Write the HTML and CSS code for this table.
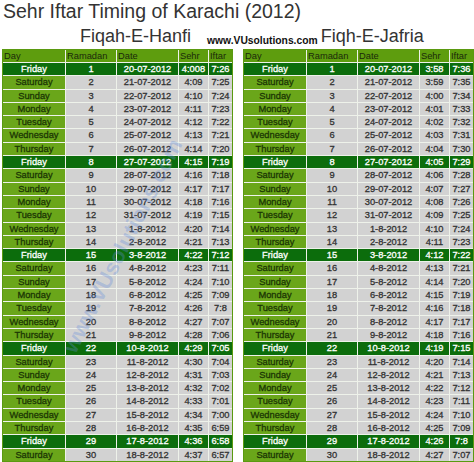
FILE: index.html
```html
<!DOCTYPE html>
<html>
<head>
<meta charset="utf-8">
<title>Sehr Iftar Timing of Karachi (2012)</title>
<link rel="stylesheet" href="styles.css">
</head>
<body>
<div class="page">
  <h1 class="title">Sehr Iftar Timing of Karachi (2012)</h1>
  <div class="subtitles">
    <span class="fiqh">Fiqah-E-Hanfi</span>
    <span class="site">www.VUsolutions.com</span>
    <span class="fiqh">Fiqh-E-Jafria</span>
  </div>
  <div class="tables">
    <div class="table">
      <div class="row head"><span>Day</span><span>Ramadan</span><span>Date</span><span>Sehr</span><span>Iftar</span></div>
      <div class="row fri"><span>Friday</span><span>1</span><span>20-07-2012</span><span>4:008</span><span>7:26</span></div>
      <div class="row"><span>Saturday</span><span>2</span><span>21-07-2012</span><span>4:09</span><span>7:25</span></div>
      <div class="row"><span>Sunday</span><span>3</span><span>22-07-2012</span><span>4:10</span><span>7:24</span></div>
      <div class="row"><span>Monday</span><span>4</span><span>23-07-2012</span><span>4:11</span><span>7:23</span></div>
      <div class="row"><span>Tuesday</span><span>5</span><span>24-07-2012</span><span>4:12</span><span>7:22</span></div>
      <div class="row"><span>Wednesday</span><span>6</span><span>25-07-2012</span><span>4:13</span><span>7:21</span></div>
      <div class="row"><span>Thursday</span><span>7</span><span>26-07-2012</span><span>4:14</span><span>7:20</span></div>
      <div class="row fri"><span>Friday</span><span>8</span><span>27-07-2012</span><span>4:15</span><span>7:19</span></div>
      <div class="row"><span>Saturday</span><span>9</span><span>28-07-2012</span><span>4:16</span><span>7:18</span></div>
      <div class="row"><span>Sunday</span><span>10</span><span>29-07-2012</span><span>4:17</span><span>7:17</span></div>
      <div class="row"><span>Monday</span><span>11</span><span>30-07-2012</span><span>4:18</span><span>7:16</span></div>
      <div class="row"><span>Tuesday</span><span>12</span><span>31-07-2012</span><span>4:19</span><span>7:15</span></div>
      <div class="row"><span>Wednesday</span><span>13</span><span>1-8-2012</span><span>4:20</span><span>7:14</span></div>
      <div class="row"><span>Thursday</span><span>14</span><span>2-8-2012</span><span>4:21</span><span>7:13</span></div>
      <div class="row fri"><span>Friday</span><span>15</span><span>3-8-2012</span><span>4:22</span><span>7:12</span></div>
      <div class="row"><span>Saturday</span><span>16</span><span>4-8-2012</span><span>4:23</span><span>7:11</span></div>
      <div class="row"><span>Sunday</span><span>17</span><span>5-8-2012</span><span>4:24</span><span>7:10</span></div>
      <div class="row"><span>Monday</span><span>18</span><span>6-8-2012</span><span>4:25</span><span>7:09</span></div>
      <div class="row"><span>Tuesday</span><span>19</span><span>7-8-2012</span><span>4:26</span><span>7:8</span></div>
      <div class="row"><span>Wednesday</span><span>20</span><span>8-8-2012</span><span>4:27</span><span>7:07</span></div>
      <div class="row"><span>Thursday</span><span>21</span><span>9-8-2012</span><span>4:28</span><span>7:06</span></div>
      <div class="row fri"><span>Friday</span><span>22</span><span>10-8-2012</span><span>4:29</span><span>7:05</span></div>
      <div class="row"><span>Saturday</span><span>23</span><span>11-8-2012</span><span>4:30</span><span>7:04</span></div>
      <div class="row"><span>Sunday</span><span>24</span><span>12-8-2012</span><span>4:31</span><span>7:03</span></div>
      <div class="row"><span>Monday</span><span>25</span><span>13-8-2012</span><span>4:32</span><span>7:02</span></div>
      <div class="row"><span>Tuesday</span><span>26</span><span>14-8-2012</span><span>4:33</span><span>7:01</span></div>
      <div class="row"><span>Wednesday</span><span>27</span><span>15-8-2012</span><span>4:34</span><span>7:00</span></div>
      <div class="row"><span>Thursday</span><span>28</span><span>16-8-2012</span><span>4:35</span><span>6:59</span></div>
      <div class="row fri"><span>Friday</span><span>29</span><span>17-8-2012</span><span>4:36</span><span>6:58</span></div>
      <div class="row"><span>Saturday</span><span>30</span><span>18-8-2012</span><span>4:37</span><span>6:57</span></div>
      <span class="watermark">www.VUsolutions.com</span>
    </div>
    <div class="table">
      <div class="row head"><span>Day</span><span>Ramadan</span><span>Date</span><span>Sehr</span><span>Iftar</span></div>
      <div class="row fri"><span>Friday</span><span>1</span><span>20-07-2012</span><span>3:58</span><span>7:36</span></div>
      <div class="row"><span>Saturday</span><span>2</span><span>21-07-2012</span><span>3:59</span><span>7:35</span></div>
      <div class="row"><span>Sunday</span><span>3</span><span>22-07-2012</span><span>4:00</span><span>7:34</span></div>
      <div class="row"><span>Monday</span><span>4</span><span>23-07-2012</span><span>4:01</span><span>7:33</span></div>
      <div class="row"><span>Tuesday</span><span>5</span><span>24-07-2012</span><span>4:02</span><span>7:32</span></div>
      <div class="row"><span>Wednesday</span><span>6</span><span>25-07-2012</span><span>4:03</span><span>7:31</span></div>
      <div class="row"><span>Thursday</span><span>7</span><span>26-07-2012</span><span>4:04</span><span>7:30</span></div>
      <div class="row fri"><span>Friday</span><span>8</span><span>27-07-2012</span><span>4:05</span><span>7:29</span></div>
      <div class="row"><span>Saturday</span><span>9</span><span>28-07-2012</span><span>4:06</span><span>7:28</span></div>
      <div class="row"><span>Sunday</span><span>10</span><span>29-07-2012</span><span>4:07</span><span>7:27</span></div>
      <div class="row"><span>Monday</span><span>11</span><span>30-07-2012</span><span>4:08</span><span>7:26</span></div>
      <div class="row"><span>Tuesday</span><span>12</span><span>31-07-2012</span><span>4:09</span><span>7:25</span></div>
      <div class="row"><span>Wednesday</span><span>13</span><span>1-8-2012</span><span>4:10</span><span>7:24</span></div>
      <div class="row"><span>Thursday</span><span>14</span><span>2-8-2012</span><span>4:11</span><span>7:23</span></div>
      <div class="row fri"><span>Friday</span><span>15</span><span>3-8-2012</span><span>4:12</span><span>7:22</span></div>
      <div class="row"><span>Saturday</span><span>16</span><span>4-8-2012</span><span>4:13</span><span>7:21</span></div>
      <div class="row"><span>Sunday</span><span>17</span><span>5-8-2012</span><span>4:14</span><span>7:20</span></div>
      <div class="row"><span>Monday</span><span>18</span><span>6-8-2012</span><span>4:15</span><span>7:19</span></div>
      <div class="row"><span>Tuesday</span><span>19</span><span>7-8-2012</span><span>4:16</span><span>7:18</span></div>
      <div class="row"><span>Wednesday</span><span>20</span><span>8-8-2012</span><span>4:17</span><span>7:17</span></div>
      <div class="row"><span>Thursday</span><span>21</span><span>9-8-2012</span><span>4:18</span><span>7:16</span></div>
      <div class="row fri"><span>Friday</span><span>22</span><span>10-8-2012</span><span>4:19</span><span>7:15</span></div>
      <div class="row"><span>Saturday</span><span>23</span><span>11-8-2012</span><span>4:20</span><span>7:14</span></div>
      <div class="row"><span>Sunday</span><span>24</span><span>12-8-2012</span><span>4:21</span><span>7:13</span></div>
      <div class="row"><span>Monday</span><span>25</span><span>13-8-2012</span><span>4:22</span><span>7:12</span></div>
      <div class="row"><span>Tuesday</span><span>26</span><span>14-8-2012</span><span>4:23</span><span>7:11</span></div>
      <div class="row"><span>Wednesday</span><span>27</span><span>15-8-2012</span><span>4:24</span><span>7:10</span></div>
      <div class="row"><span>Thursday</span><span>28</span><span>16-8-2012</span><span>4:25</span><span>7:09</span></div>
      <div class="row fri"><span>Friday</span><span>29</span><span>17-8-2012</span><span>4:26</span><span>7:8</span></div>
      <div class="row"><span>Saturday</span><span>30</span><span>18-8-2012</span><span>4:27</span><span>7:07</span></div>
    </div>
  </div>
</div>
</body>
</html>
```
FILE: styles.css
```css
html, body {
  margin: 0;
  padding: 0;
  background: #ffffff;
}

body {
  font-family: "Liberation Sans", Arial, sans-serif;
  width: 474px;
  height: 462px;
  overflow: hidden;
}

.title {
  margin: 0;
  height: 21px;
  box-sizing: border-box;
  padding: 1px 0 0 3px;
  font-size: 19.5px;
  line-height: 20px;
  font-weight: normal;
  color: #333333;
  white-space: nowrap;
}

.subtitles {
  display: flex;
  align-items: flex-end;
  height: 28px;
  padding-left: 80px;
  white-space: nowrap;
}

.fiqh {
  font-size: 18px;
  line-height: 18px;
  color: #333333;
  margin-bottom: 4.5px;
}

.site {
  font-size: 10.3px;
  line-height: 11px;
  font-weight: bold;
  color: #111111;
  margin: 0 3px 2.6px 16px;
}

.tables {
  display: flex;
  gap: 10px;
  padding-left: 2px;
}

.table {
  position: relative;
  flex: none;
  width: 231px;
  box-sizing: border-box;
  border: 1px solid #5a9a10;
  background: #eef2ea;
  display: flex;
  flex-direction: column;
  gap: 1px;
  overflow: hidden;
}

.row {
  display: grid;
  grid-template-columns: 62px 50px 61px 29px 23px;
  column-gap: 1px;
  height: 12.3px;
  font-size: 9.3px;
  line-height: 12.3px;
}

.row span {
  text-align: center;
  background: #d2d2d2;
  color: #333333;
  white-space: nowrap;
  overflow: hidden;
  -webkit-text-stroke: 0.3px currentColor;
}

.row span:first-child {
  background: #6aa61a;
  color: #1b3604;
}

.row.head {
  height: 12px;
  line-height: 12px;
}

.row.head span {
  background: #5e9d0e;
  color: #1a2a0a;
  text-align: left;
  padding-left: 1px;
  -webkit-text-stroke: 0;
}

.row.fri span {
  background: #0c6d0c;
  color: #ffffff;
}

.watermark {
  position: absolute;
  left: 120px;
  top: 196px;
  transform: translate(-50%, -50%) rotate(-63deg);
  font-size: 22px;
  font-weight: bold;
  color: rgba(100, 140, 220, 0.32);
  white-space: nowrap;
  pointer-events: none;
}
```
